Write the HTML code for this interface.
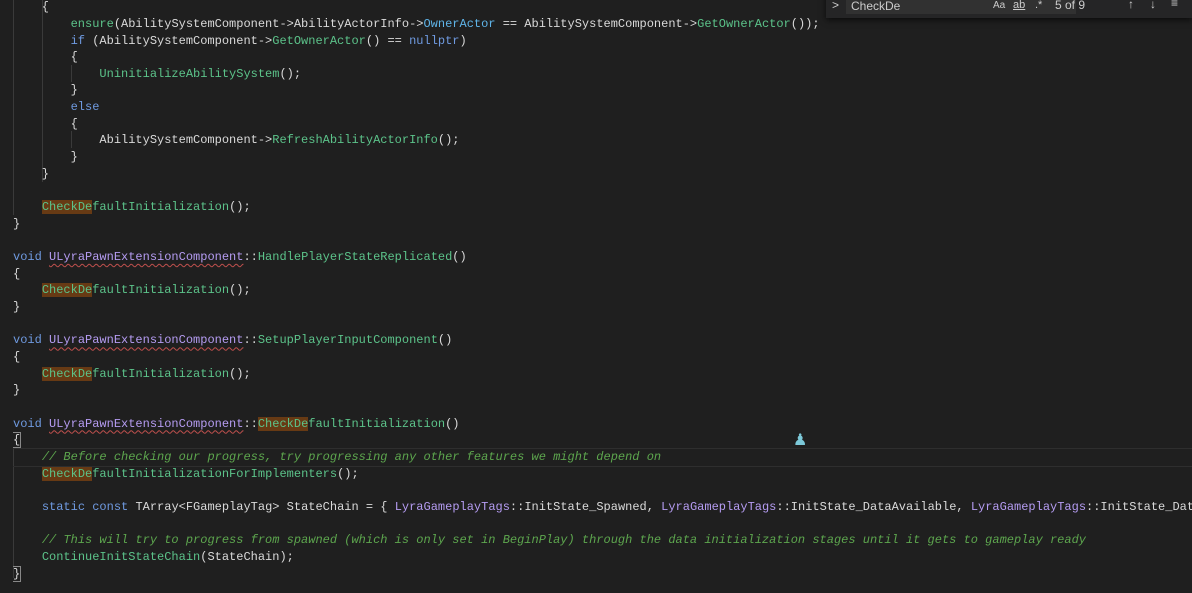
<!DOCTYPE html>
<html><head><style>
body{margin:0;width:1192px;height:593px;background:#1f1f1f;overflow:hidden;position:relative;font-family:"Liberation Mono",monospace;font-size:12px;color:#dadada}
#code{position:absolute;left:13px;right:0;top:-0.8px;white-space:pre;line-height:16.65px;overflow:hidden}
.k{color:#6f9ae0}.f{color:#5cc38a}.c{color:#b59cf2}.m{color:#5fb4e8}.cm{color:#5da64e;font-style:italic}
.h{background:#673a14}
.u{text-decoration:underline wavy #c0504d;text-decoration-thickness:1px;text-underline-offset:3px}
.guide{position:absolute;width:1px;background:#3a3a3a}
#cur{position:absolute;left:13px;right:0;top:448px;height:17px;border:1px solid #2e2e2e;border-left:none;border-right:none}
#find{position:absolute;left:826px;top:-6px;width:366px;height:24px;background:#252526;box-shadow:0 2px 6px #000a;font-family:"Liberation Sans",sans-serif;font-size:12px;color:#ccc}
#find .in{position:absolute;left:20px;top:2px;width:230px;height:18px;background:#313131}
</style></head><body>
<div class="guide" style="left:13px;top:0;height:215px"></div>
<div class="guide" style="left:42px;top:0;height:182px"></div>
<div class="guide" style="left:71px;top:65px;height:17px"></div>
<div class="guide" style="left:71px;top:131px;height:17px"></div>
<div class="guide" style="left:13px;top:448px;height:130px"></div>
<div id="cur"></div>
<div id="code">    {
        <span class="f">ensure</span>(AbilitySystemComponent-&gt;AbilityActorInfo-&gt;<span class="m">OwnerActor</span> == AbilitySystemComponent-&gt;<span class="f">GetOwnerActor</span>());
        <span class="k">if</span> (AbilitySystemComponent-&gt;<span class="f">GetOwnerActor</span>() == <span class="k">nullptr</span>)
        {
            <span class="f">UninitializeAbilitySystem</span>();
        }
        <span class="k">else</span>
        {
            AbilitySystemComponent-&gt;<span class="f">RefreshAbilityActorInfo</span>();
        }
    }

    <span class="f"><span class="h">CheckDe</span>faultInitialization</span>();
}

<span class="k">void</span> <span class="c u">ULyraPawnExtensionComponent</span>::<span class="f">HandlePlayerStateReplicated</span>()
{
    <span class="f"><span class="h">CheckDe</span>faultInitialization</span>();
}

<span class="k">void</span> <span class="c u">ULyraPawnExtensionComponent</span>::<span class="f">SetupPlayerInputComponent</span>()
{
    <span class="f"><span class="h">CheckDe</span>faultInitialization</span>();
}

<span class="k">void</span> <span class="c u">ULyraPawnExtensionComponent</span>::<span class="f"><span class="h">CheckDe</span>faultInitialization</span>()
<span style="outline:1px solid #888">{</span>
    <span class="cm">// Before checking our progress, try progressing any other features we might depend on</span>
    <span class="f"><span class="h">CheckDe</span>faultInitializationForImplementers</span>();

    <span class="k">static</span> <span class="k">const</span> TArray&lt;FGameplayTag&gt; StateChain = { <span class="c">LyraGameplayTags</span>::InitState_Spawned, <span class="c">LyraGameplayTags</span>::InitState_DataAvailable, <span class="c">LyraGameplayTags</span>::InitState_DataInitialized };

    <span class="cm">// This will try to progress from spawned (which is only set in BeginPlay) through the data initialization stages until it gets to gameplay ready</span>
    <span class="f">ContinueInitStateChain</span>(StateChain);
<span style="outline:1px solid #888">}</span></div>
<div style="position:absolute;left:793px;top:430px;width:20px;height:20px;color:#7cc8d8;font-size:16px;font-family:'DejaVu Sans',sans-serif">♟</div>
<div id="find">
<span style="position:absolute;left:6px;top:4px">&gt;</span>
<div class="in"><span style="position:absolute;left:5px;top:3px">CheckDe</span>
<span style="position:absolute;left:147px;top:4px;font-size:10px">Aa</span>
<span style="position:absolute;left:167px;top:3px;font-size:11px;text-decoration:underline">ab</span>
<span style="position:absolute;left:189px;top:3px;font-size:11px">.*</span></div>
<span style="position:absolute;left:229px;top:4px">5 of 9</span>
<span style="position:absolute;left:302px;top:3px">↑</span>
<span style="position:absolute;left:324px;top:3px">↓</span>
<span style="position:absolute;left:345px;top:2px">≡</span>
</div>
</body></html>
